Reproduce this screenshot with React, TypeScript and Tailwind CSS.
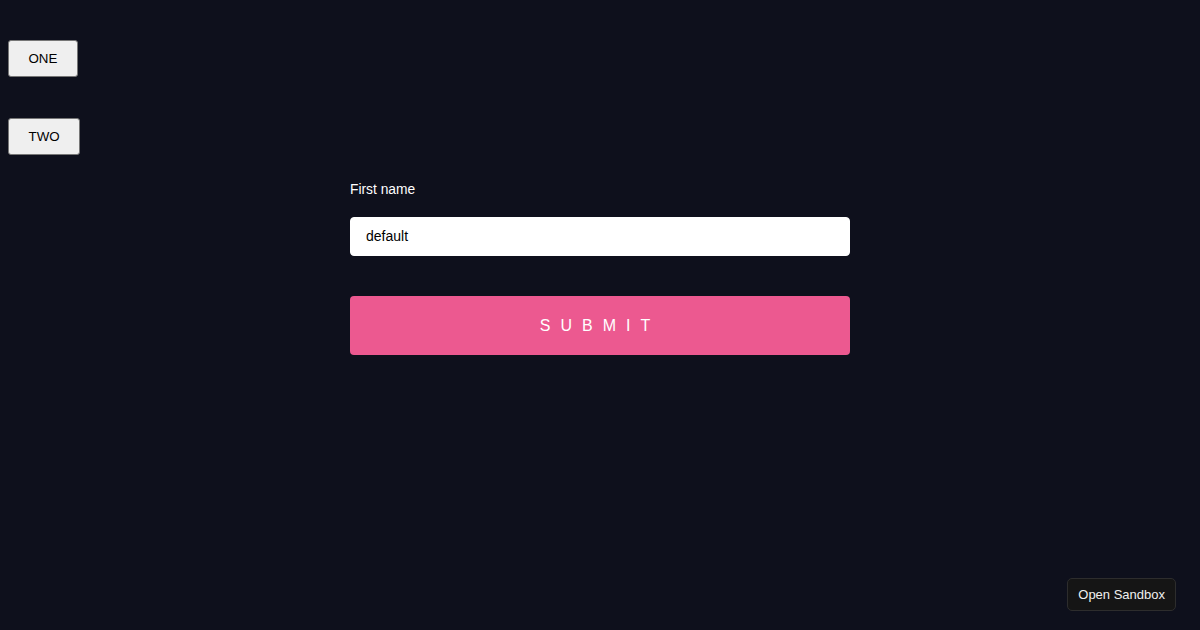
const App = () => {
  return (
    <div className="relative min-h-screen w-full bg-[#0e101c] font-['Liberation_Sans',Arial,sans-serif]">
      {/* top buttons */}
      <div className="flex flex-col items-start pl-2 pt-10">
        <button className="h-[37px] rounded-[3px] border border-[#767676] bg-[#efefef] px-[19.5px] text-[13.33px] text-black">
          ONE
        </button>
        <button className="mt-[41px] h-[37px] rounded-[3px] border border-[#767676] bg-[#efefef] px-[19.5px] text-[13.33px] text-black">
          TWO
        </button>
      </div>

      {/* form */}
      <form className="mx-auto w-[500px]" onSubmit={(e) => e.preventDefault()}>
        <label className="mt-[21px] mb-[13px] block text-left text-[13.8px] leading-7 font-extralight text-white">
          First name
        </label>
        <input
          defaultValue="default"
          className="block w-full rounded border border-white bg-white px-[15px] py-[10px] text-sm leading-[17px] text-black outline-none"
        />
        <button
          type="submit"
          className="mt-10 block w-full rounded bg-[#ec5990] p-5 text-base leading-[19px] font-thin tracking-[10px] text-white uppercase"
        >
          submit
        </button>
      </form>

      {/* sandbox overlay */}
      <button className="absolute right-6 bottom-[19px] h-[33px] rounded-[5px] border border-[#2d2d2d] bg-[#151515] px-[10px] text-[13px] text-[#f0f0f0]">
        Open Sandbox
      </button>
    </div>
  );
};

export default App;
